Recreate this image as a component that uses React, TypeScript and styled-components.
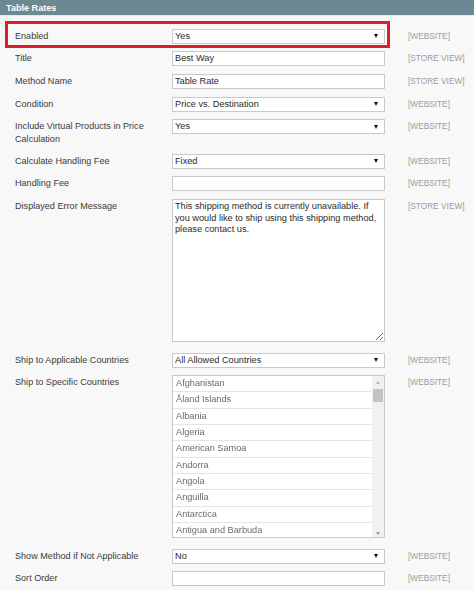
import React from "react";
import styled, { createGlobalStyle } from "styled-components";

const Global = createGlobalStyle`
  html, body { margin: 0; padding: 0; background: #f8f8f8; }
  body { font-family: "Liberation Sans", Arial, sans-serif; }
`;

const Page = styled.div`
  width: 474px;
  height: 590px;
  background: #f8f8f8;
  overflow: hidden;
`;

const Header = styled.div`
  height: 16px;
  background: #6c8892;
  color: #fff;
  font-weight: bold;
  font-size: 9.1px;
  line-height: 16px;
  padding-left: 6px;
  border-bottom: 1px solid #e4e8ea;
  box-sizing: border-box;
`;

const Form = styled.div`
  padding-top: 9px;
  display: flex;
  flex-direction: column;
`;

const Row = styled.div<{ $highlight?: boolean }>`
  position: relative;
  display: grid;
  grid-template-columns: 157px 213px 1fr;
  padding: 3.8px 0 3.8px 15px;
  align-items: start;
  ${(p) =>
    p.$highlight &&
    `
    &::after {
      content: "";
      position: absolute;
      left: 5px;
      top: -4px;
      width: 385px;
      height: 27px;
      border: 3px solid #dc1f27;
      box-sizing: border-box;
      pointer-events: none;
    }
  `}
`;

const Label = styled.div`
  font-size: 9.1px;
  line-height: 13px;
  color: #3b3b3b;
  padding-top: 1px;
  padding-right: 8px;
`;

const Scope = styled.div`
  font-size: 8.3px;
  line-height: 13px;
  color: #9c9c9c;
  padding-top: 1px;
  padding-left: 23px;
  white-space: nowrap;
`;

const Field = styled.div`
  height: 15px;
  box-sizing: border-box;
  border: 1px solid #c9c9c9;
  background: #fff;
  font-size: 9.2px;
  line-height: 13px;
  color: #2a2a2a;
  padding: 0 6px 0 2px;
  display: flex;
  align-items: center;
  justify-content: space-between;
`;

const Arrow = styled.span`
  width: 0;
  height: 0;
  border-left: 2.5px solid transparent;
  border-right: 2.5px solid transparent;
  border-top: 4px solid #111;
`;

const TextArea = styled.textarea`
  display: block;
  width: 213px;
  height: 143px;
  box-sizing: border-box;
  border: 1px solid #c9c9c9;
  background: #fff;
  font-family: "Liberation Sans", Arial, sans-serif;
  font-size: 9.2px;
  line-height: 11.5px;
  color: #2a2a2a;
  padding: 1.5px 3px 2px 2px;
  margin: 0 0 3px 0;
  resize: vertical;
  outline: none;
`;

const ListBox = styled.div`
  width: 213px;
  height: 163px;
  box-sizing: border-box;
  border: 1px solid #c9c9c9;
  background: #fff;
  display: grid;
  grid-template-columns: 1fr 12px;
  margin-bottom: 3px;
  overflow: hidden;
`;

const Options = styled.div`
  display: flex;
  flex-direction: column;
`;

const Option = styled.div`
  height: 16.3px;
  box-sizing: border-box;
  border-bottom: 1px solid #e4e4e4;
  font-size: 9.2px;
  line-height: 15.3px;
  color: #6a6a6a;
  padding-left: 3px;
  white-space: nowrap;
  &:last-child { border-bottom: none; }
`;

const Blurred = styled.span`
  display: inline-block;
  filter: blur(0.75px);
`;

const ScrollBar = styled.div`
  background: #f1f1f1;
  display: flex;
  flex-direction: column;
  align-items: center;
`;

const ScrollArrow = styled.div<{ $down?: boolean }>`
  height: 12px;
  width: 12px;
  display: flex;
  align-items: center;
  justify-content: center;
  &::before {
    content: "";
    width: 0;
    height: 0;
    border-left: 2.5px solid transparent;
    border-right: 2.5px solid transparent;
    ${(p) =>
      p.$down
        ? "border-top: 3px solid #9a9a9a;"
        : "border-bottom: 3px solid #b3b3b3;"}
  }
`;

const Thumb = styled.div`
  width: 10px;
  height: 13px;
  background: #c3c3c3;
  margin-top: 1px;
`;

const Spacer = styled.div`
  flex: 1;
`;

type Kind = "select" | "input" | "textarea" | "list";

interface RowDef {
  label: string;
  kind: Kind;
  value?: string;
  scope: string;
  highlight?: boolean;
}

const rows: RowDef[] = [
  { label: "Enabled", kind: "select", value: "Yes", scope: "[WEBSITE]", highlight: true },
  { label: "Title", kind: "input", value: "Best Way", scope: "[STORE VIEW]" },
  { label: "Method Name", kind: "input", value: "Table Rate", scope: "[STORE VIEW]" },
  { label: "Condition", kind: "select", value: "Price vs. Destination", scope: "[WEBSITE]" },
  { label: "Include Virtual Products in Price Calculation", kind: "select", value: "Yes", scope: "[WEBSITE]" },
  { label: "Calculate Handling Fee", kind: "select", value: "Fixed", scope: "[WEBSITE]" },
  { label: "Handling Fee", kind: "input", value: "", scope: "[WEBSITE]" },
  {
    label: "Displayed Error Message",
    kind: "textarea",
    value:
      "This shipping method is currently unavailable. If you would like to ship using this shipping method, please contact us.",
    scope: "[STORE VIEW]",
  },
  { label: "Ship to Applicable Countries", kind: "select", value: "All Allowed Countries", scope: "[WEBSITE]" },
  { label: "Ship to Specific Countries", kind: "list", scope: "[WEBSITE]" },
  { label: "Show Method if Not Applicable", kind: "select", value: "No", scope: "[WEBSITE]" },
  { label: "Sort Order", kind: "input", value: "", scope: "[WEBSITE]" },
];

const countries = [
  "Afghanistan",
  "Åland Islands",
  "Albania",
  "Algeria",
  "American Samoa",
  "Andorra",
  "Angola",
  "Anguilla",
  "Antarctica",
  "Antigua and Barbuda",
];

function Control({ row }: { row: RowDef }) {
  switch (row.kind) {
    case "select":
      return (
        <Field>
          <span>{row.value}</span>
          <Arrow />
        </Field>
      );
    case "input":
      return (
        <Field>
          <span>{row.value}</span>
        </Field>
      );
    case "textarea":
      return <TextArea readOnly defaultValue={row.value} />;
    case "list":
      return (
        <ListBox>
          <Options>
            {countries.map((c) => (
              <Option key={c}>
                <Blurred>{c}</Blurred>
              </Option>
            ))}
          </Options>
          <ScrollBar>
            <ScrollArrow />
            <Thumb />
            <Spacer />
            <ScrollArrow $down />
          </ScrollBar>
        </ListBox>
      );
  }
}

export default function App() {
  return (
    <Page>
      <Global />
      <Header>Table Rates</Header>
      <Form>
        {rows.map((r) => (
          <Row key={r.label} $highlight={r.highlight}>
            <Label>{r.label}</Label>
            <Control row={r} />
            <Scope>{r.scope}</Scope>
          </Row>
        ))}
      </Form>
    </Page>
  );
}
